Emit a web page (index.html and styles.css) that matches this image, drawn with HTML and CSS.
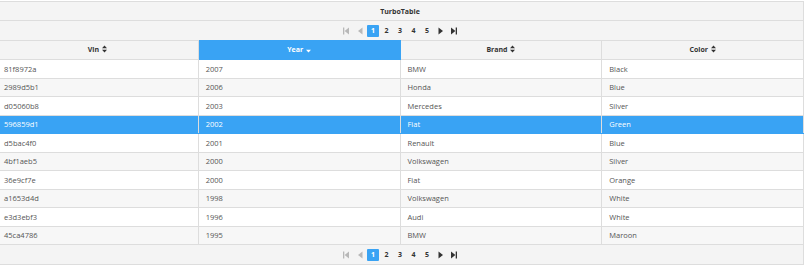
FILE: index.html
```html
<!DOCTYPE html>
<html>
<head>
<meta charset="utf-8">
<link rel="stylesheet" href="styles.css">
</head>
<body>
<div class="tt">
  <div class="caption">TurboTable</div>
  <div class="paginator">
    <span class="pg-icon dis"><svg width="6" height="8" viewBox="0 0 6 8"><rect x="0" y="0.5" width="1.3" height="7" fill="currentColor"/><path d="M6 0.5 L1.6 4 L6 7.5 Z" fill="currentColor"/></svg></span>
    <span class="pg-icon dis"><svg width="6" height="8" viewBox="0 0 6 8"><path d="M5.5 0.5 L1 4 L5.5 7.5 Z" fill="currentColor"/></svg></span>
    <span class="pg active">1</span>
    <span class="pg">2</span>
    <span class="pg">3</span>
    <span class="pg">4</span>
    <span class="pg">5</span>
    <span class="pg-icon"><svg width="6" height="8" viewBox="0 0 6 8"><path d="M0.5 0.5 L5 4 L0.5 7.5 Z" fill="currentColor"/></svg></span>
    <span class="pg-icon"><svg width="6" height="8" viewBox="0 0 6 8"><path d="M0 0.5 L4.4 4 L0 7.5 Z" fill="currentColor"/><rect x="4.7" y="0.5" width="1.3" height="7" fill="currentColor"/></svg></span>
  </div>
  <table class="grid">
    <thead>
      <tr>
        <th>Vin <svg class="sort" width="5" height="8" viewBox="0 0 5 8"><path d="M0 3.2 L2.5 0.5 L5 3.2 Z M0 4.8 L2.5 7.5 L5 4.8 Z" fill="currentColor"/></svg></th>
        <th class="sorted">Year <svg class="sort" width="5" height="8" viewBox="0 0 5 8"><path d="M0 4.8 L2.5 7.5 L5 4.8 Z" fill="currentColor"/></svg></th>
        <th>Brand <svg class="sort" width="5" height="8" viewBox="0 0 5 8"><path d="M0 3.2 L2.5 0.5 L5 3.2 Z M0 4.8 L2.5 7.5 L5 4.8 Z" fill="currentColor"/></svg></th>
        <th>Color <svg class="sort" width="5" height="8" viewBox="0 0 5 8"><path d="M0 3.2 L2.5 0.5 L5 3.2 Z M0 4.8 L2.5 7.5 L5 4.8 Z" fill="currentColor"/></svg></th>
      </tr>
    </thead>
    <tbody>
      <tr><td>81f8972a</td><td>2007</td><td>BMW</td><td>Black</td></tr>
      <tr><td>2989d5b1</td><td>2006</td><td>Honda</td><td>Blue</td></tr>
      <tr><td>d05060b8</td><td>2003</td><td>Mercedes</td><td>Silver</td></tr>
      <tr class="sel"><td>596859d1</td><td>2002</td><td>Fiat</td><td>Green</td></tr>
      <tr><td>d5bac4f0</td><td>2001</td><td>Renault</td><td>Blue</td></tr>
      <tr><td>4bf1aeb5</td><td>2000</td><td>Volkswagen</td><td>Silver</td></tr>
      <tr><td>36e9cf7e</td><td>2000</td><td>Fiat</td><td>Orange</td></tr>
      <tr><td>a1653d4d</td><td>1998</td><td>Volkswagen</td><td>White</td></tr>
      <tr><td>e3d3ebf3</td><td>1996</td><td>Audi</td><td>White</td></tr>
      <tr><td>45ca4786</td><td>1995</td><td>BMW</td><td>Maroon</td></tr>
    </tbody>
  </table>
  <div class="paginator bottom">
    <span class="pg-icon dis"><svg width="6" height="8" viewBox="0 0 6 8"><rect x="0" y="0.5" width="1.3" height="7" fill="currentColor"/><path d="M6 0.5 L1.6 4 L6 7.5 Z" fill="currentColor"/></svg></span>
    <span class="pg-icon dis"><svg width="6" height="8" viewBox="0 0 6 8"><path d="M5.5 0.5 L1 4 L5.5 7.5 Z" fill="currentColor"/></svg></span>
    <span class="pg active">1</span>
    <span class="pg">2</span>
    <span class="pg">3</span>
    <span class="pg">4</span>
    <span class="pg">5</span>
    <span class="pg-icon"><svg width="6" height="8" viewBox="0 0 6 8"><path d="M0.5 0.5 L5 4 L0.5 7.5 Z" fill="currentColor"/></svg></span>
    <span class="pg-icon"><svg width="6" height="8" viewBox="0 0 6 8"><path d="M0 0.5 L4.4 4 L0 7.5 Z" fill="currentColor"/><rect x="4.7" y="0.5" width="1.3" height="7" fill="currentColor"/></svg></span>
  </div>
</div>
</body>
</html>
```
FILE: styles.css
```css
html, body {
  margin: 0;
  padding: 0;
  background: #ffffff;
}
body {
  font-family: "Open Sans", "DejaVu Sans", sans-serif;
  font-size: 7.5px;
  color: #555555;
}
.tt {
  width: 808px;
  margin: 1px 0 0 -4px;
}
.caption {
  box-sizing: border-box;
  height: 19px;
  background: #f4f4f4;
  border: 1px solid #dddddd;
  border-bottom: none;
  display: flex;
  align-items: center;
  justify-content: center;
  font-weight: 700;
  font-size: 7px;
  color: #333333;
}
.paginator {
  box-sizing: border-box;
  height: 20px;
  background: #f4f4f4;
  border: 1px solid #dddddd;
  border-bottom: none;
  display: flex;
  align-items: center;
  justify-content: center;
  color: #333333;
}
.paginator.bottom {
  border-bottom: 1px solid #dddddd;
  border-top: none;
}
.pg, .pg-icon {
  width: 12px;
  height: 12px;
  margin: 0 0.75px;
  display: flex;
  align-items: center;
  justify-content: center;
  font-weight: 700;
  font-size: 7px;
  color: #333333;
}
.pg-icon.dis {
  color: #b8b8b8;
}
.pg.active {
  background: #39a3f4;
  color: #ffffff;
  border-radius: 1px;
}
.grid {
  width: 808px;
  border-collapse: collapse;
  table-layout: fixed;
}
.grid th {
  height: 18px;
  padding: 0 6px;
  background: #f4f4f4;
  border: 1px solid #dddddd;
  font-weight: 700;
  font-size: 7px;
  color: #333333;
  text-align: center;
  line-height: 10px;
}
.grid th.sorted {
  background: #39a3f4;
  color: #ffffff;
  border-color: #39a3f4;
}
.sort {
  vertical-align: -1px;
  margin-left: 1px;
}
.grid td {
  height: 17.5px;
  padding: 0 7px;
  border: 1px solid #dddddd;
  line-height: 10px;
  white-space: nowrap;
}
.grid tbody tr:nth-child(even) {
  background: #f7f7f7;
}
.grid tbody tr.sel {
  background: #39a3f4;
  color: #ffffff;
}
.grid tbody tr.sel td {
  border-color: #39a3f4;
  border-right-color: #dddddd;
  border-left-color: #dddddd;
}
```
